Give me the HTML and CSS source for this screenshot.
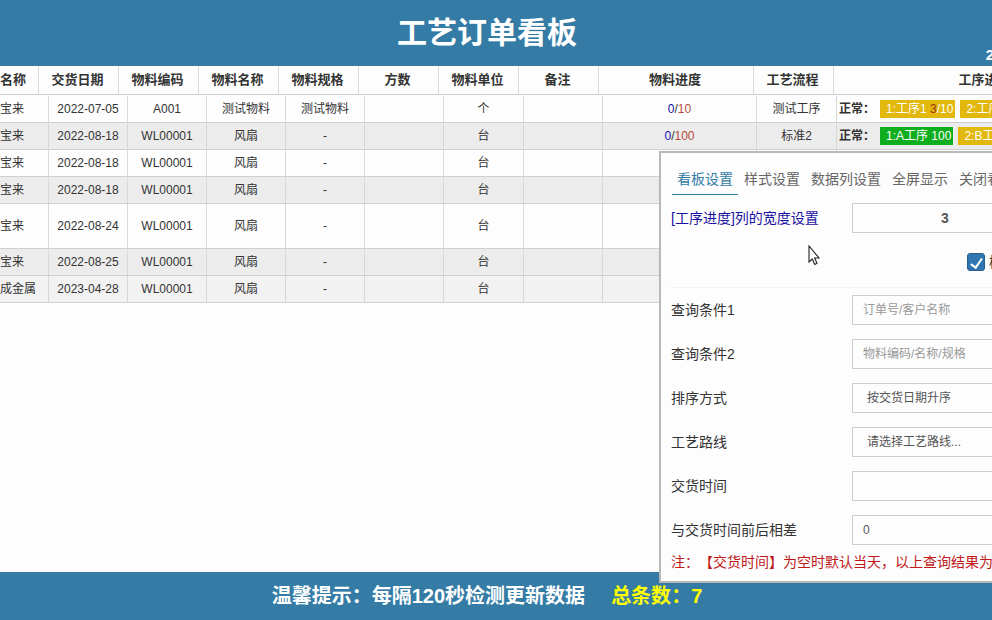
FILE: index.html
```html
<!DOCTYPE html>
<html lang="zh-CN">
<head>
<meta charset="utf-8">
<title>工艺订单看板</title>
<link rel="stylesheet" href="styles.css">
</head>
<body>
<header class="top">
  <h1>工艺订单看板</h1>
  <span class="clock">2</span>
</header>
<main class="board">
  <table class="grid grid-head">
    <colgroup><col class="h-first"><col class="h-col" span="7"><col class="h-progress"><col class="h-col"><col class="h-steps"></colgroup>
    <thead>
      <tr><th class="first">名称</th><th>交货日期</th><th>物料编码</th><th>物料名称</th><th>物料规格</th><th>方数</th><th>物料单位</th><th>备注</th><th>物料进度</th><th>工艺流程</th><th>工序进度</th></tr>
    </thead>
  </table>
  <table class="grid grid-body">
    <colgroup><col class="b-first"><col class="b-col" span="5"><col class="b-unit"><col class="b-col"><col class="b-progress"><col class="b-flow"><col class="b-steps"></colgroup>
    <tbody>
      <tr><td class="first">宝来</td><td>2022-07-05</td><td>A001</td><td>测试物料</td><td>测试物料</td><td></td><td>个</td><td></td><td><span class="done">0</span>/<span class="total">10</span></td><td>测试工序</td><td class="steps"><b>正常：</b><span class="tag">1:工序1 <i>3</i>/10</span><span class="tag">2:工序2</span></td></tr>
      <tr class="alt"><td class="first">宝来</td><td>2022-08-18</td><td>WL00001</td><td>风扇</td><td>-</td><td></td><td>台</td><td></td><td><span class="done">0</span>/<span class="total">100</span></td><td>标准2</td><td class="steps"><b>正常：</b><span class="tag tag-done">1:A工序 100</span><span class="tag">2:B工序</span></td></tr>
      <tr><td class="first">宝来</td><td>2022-08-18</td><td>WL00001</td><td>风扇</td><td>-</td><td></td><td>台</td><td></td><td></td><td></td><td></td></tr>
      <tr class="alt"><td class="first">宝来</td><td>2022-08-18</td><td>WL00001</td><td>风扇</td><td>-</td><td></td><td>台</td><td></td><td></td><td></td><td></td></tr>
      <tr class="tall"><td class="first">宝来</td><td>2022-08-24</td><td>WL00001</td><td>风扇</td><td>-</td><td></td><td>台</td><td></td><td></td><td></td><td></td></tr>
      <tr class="alt"><td class="first">宝来</td><td>2022-08-25</td><td>WL00001</td><td>风扇</td><td>-</td><td></td><td>台</td><td></td><td></td><td></td><td></td></tr>
      <tr class="hover"><td class="first long">成金属</td><td>2023-04-28</td><td>WL00001</td><td>风扇</td><td>-</td><td></td><td>台</td><td></td><td></td><td></td><td></td></tr>
    </tbody>
  </table>
</main>
<footer class="bottom">
  <span>温馨提示<span class="colon">：</span>每隔120秒检测更新数据</span>
  <span class="count">总条数<span class="colon">：</span>7</span>
</footer>
<section class="panel">
  <nav class="tabs">
    <button type="button" class="active">看板设置</button><button type="button">样式设置</button><button type="button">数据列设置</button><button type="button">全屏显示</button><button type="button">关闭看板</button>
  </nav>
  <form>
    <div class="field"><label class="link" for="width">[工序进度]列的宽度设置</label><input class="number" id="width" type="text" value="3"></div>
    <div class="check"><input id="merge" type="checkbox" checked><label for="merge">模</label></div>
    <div class="field"><label for="q1">查询条件1</label><input id="q1" type="text" placeholder="订单号/客户名称"></div>
    <div class="field"><label for="q2">查询条件2</label><input id="q2" type="text" placeholder="物料编码/名称/规格"></div>
    <div class="field"><label for="sort">排序方式</label><select id="sort"><option>按交货日期升序</option></select></div>
    <div class="field"><label for="route">工艺路线</label><select id="route"><option>请选择工艺路线...</option></select></div>
    <div class="field"><label for="date">交货时间</label><input id="date" type="text"></div>
    <div class="field last"><label for="diff">与交货时间前后相差</label><input id="diff" type="text" value="0"></div>
    <p class="note">注<span class="colon">：</span>【交货时间】为空时默认当天，以上查询结果为</p>
  </form>
</section>
<svg class="cursor" width="13" height="21" viewBox="0 0 13 21" aria-hidden="true"><path d="M2 1V17L5.200 14L7.800 19.500L10 18.300L7.600 13H12Z" fill="#fff" stroke="#222" stroke-width="1.100"/></svg>
</body>
</html>
```
FILE: styles.css
```css
* { box-sizing: border-box; }
body {
  position: relative;
  display: flex;
  flex-direction: column;
  min-height: 100vh;
  margin: 0;
  overflow: hidden;
  background: #fdfdfd;
  color: #333;
  font: 12px/18px "Liberation Sans", "Noto Sans CJK SC", sans-serif;
  text-spacing-trim: space-all;
}
.colon { font-family: "Noto Sans CJK TC", sans-serif; line-height: 1; }
.top {
  position: relative;
  padding: 0 18px 0 0;
  background: #347ca5;
  color: #fff;
  text-align: center;
}
h1 { margin: 0; font-size: 30px; line-height: 66px; }
.clock {
  position: absolute;
  right: -2px;
  bottom: 2px;
  font-size: 15px;
  font-weight: bold;
}
.board { flex: 1; overflow: hidden; }
.grid { width: 0; table-layout: fixed; border-collapse: separate; border-spacing: 0; }
.grid-body { margin-top: 1px; }
.grid th, .grid td {
  padding: 0;
  border-right: 1px solid #d8d8d8;
  border-bottom: 1px solid #d0d0d0;
  text-align: center;
  white-space: nowrap;
}
.grid th { height: 29px; padding-right: 2px; font-size: 13px; }
.grid td { height: 27px; }
.h-first { width: 39px; }
.h-col { width: 80px; }
.h-progress { width: 155px; }
.h-steps { width: 304px; }
.b-first { width: 49px; }
.b-col { width: 79px; }
.b-unit { width: 80px; }
.b-progress { width: 154px; }
.b-flow { width: 80px; }
.b-steps { width: 304px; }
.grid .first { padding-right: 14px; text-align: right; }
.grid td.first { padding-right: 27px; }
.grid td.long { padding-right: 15px; }
.alt { background: #ececec; }
.hover { background: #f2f2f2; }
.grid .tall td { height: 45px; }
.done { color: #1010b0; }
.total { color: #b84a3c; }
.grid .steps { padding-left: 2px; text-align: left; }
.tag {
  display: inline-block;
  margin-left: 5px;
  padding: 0 2px 0 6px;
  background: #e2b80c;
  color: #fff;
}
.tag i { color: #a03010; font-style: normal; }
.tag-done { background: #0fae1e; }
.bottom {
  display: flex;
  justify-content: center;
  gap: 26px;
  padding-right: 18px;
  background: #347ca5;
  color: #fff;
  font-size: 20px;
  font-weight: bold;
  line-height: 48px;
}
.count { color: #ff0; }
.panel {
  position: absolute;
  top: 151px;
  left: 659px;
  width: 400px;
  padding: 12px 10px 10px;
  border: 2px solid #b8b8b8;
  background: #fdfdfd;
  font-size: 14px;
}
.tabs { display: flex; gap: 1px; padding-left: 1px; }
.tabs button {
  flex: none;
  padding: 0 5px 1px;
  border: 0;
  border-bottom: 1px solid transparent;
  background: none;
  color: #666;
  font: inherit;
  line-height: 28px;
}
.tabs .active { border-color: #347ca5; color: #347ca5; }
.tabs + form { padding-top: 8px; }
.field {
  display: grid;
  grid-template-columns: 181px 186px;
  align-items: center;
  margin-bottom: 14px;
}
.link { color: #1a10a0; }
.field input, .field select {
  appearance: none;
  width: 100%;
  height: 30px;
  padding: 0 10px;
  border: 1px solid #ccc;
  border-radius: 0;
  background: #fdfdfd;
  color: #555;
  font: inherit;
  font-size: 12px;
}
.field select { padding-left: 14px; }
.field input::placeholder { color: #999; }
.field .number { font-size: 14px; font-weight: bold; text-align: center; }
.check {
  display: flex;
  align-items: flex-start;
  gap: 4px;
  height: 41px;
  margin-bottom: 7px;
  padding: 6px 0 0 296px;
  border-bottom: 1px solid #f4f4f4;
  white-space: nowrap;
}
.check input {
  flex: none;
  appearance: none;
  width: 18px;
  height: 18px;
  margin: 0;
  border: 1px solid #286090;
  border-radius: 3px;
  background: #2f76b0;
}
.check input::before {
  content: "";
  display: block;
  width: 5px;
  height: 10px;
  margin: 2px auto;
  border: solid #fff;
  border-width: 0 2px 2px 0;
  transform: rotate(35deg);
}
.last { margin-bottom: 8px; }
.note { margin: 0; color: #c01818; white-space: nowrap; }
.cursor { position: absolute; top: 245px; left: 807px; }
```
